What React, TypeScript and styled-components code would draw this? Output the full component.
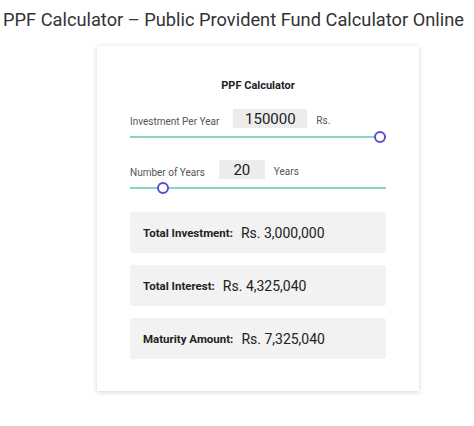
import { FC } from 'react';
import styled, { createGlobalStyle } from 'styled-components';

const GlobalStyle = createGlobalStyle`
  html, body {
    margin: 0;
    padding: 0;
    background: #ffffff;
    font-family: Roboto, 'Liberation Sans', Arial, sans-serif;
  }
`;

const Page = styled.div`
  width: 474px;
  height: 426px;
  overflow: hidden;
`;

const PageTitle = styled.h1`
  margin: 0;
  padding: 9px 0 0 3px;
  font-size: 18.25px;
  font-weight: 400;
  line-height: 22px;
  color: #333333;
  white-space: nowrap;
`;

const Card = styled.div`
  width: 322px;
  box-sizing: border-box;
  margin: 15px 0 0 97px;
  padding: 33px 33px 32px;
  background: #ffffff;
  box-shadow: 0 1px 5px rgba(0, 0, 0, 0.18);
`;

const CardHeading = styled.h2`
  margin: 0 0 17px;
  font-size: 11px;
  line-height: 13px;
  font-weight: 700;
  text-align: center;
  color: #222222;
`;

const InputRow = styled.div<{ $gap: number }>`
  display: flex;
  align-items: baseline;
  height: 19px;
  margin-top: ${(p) => p.$gap}px;
`;

const Label = styled.span`
  font-size: 10px;
  color: #555555;
  position: relative;
  top: 1px;
`;

const ValueBox = styled.div<{ $width: number }>`
  width: ${(p) => p.$width}px;
  height: 19px;
  margin-left: 14px;
  background: #ececec;
  font-size: 15px;
  line-height: 20px;
  color: #222222;
  text-align: center;
`;

const Unit = styled.span`
  margin-left: 9px;
  font-size: 10px;
  color: #555555;
`;

const SliderWrap = styled.div`
  position: relative;
  height: 12px;
  margin-top: 3px;
`;

const Track = styled.div`
  position: absolute;
  left: 0;
  right: 0;
  top: 5px;
  height: 1.5px;
  background: #8fd2c5;
`;

const Thumb = styled.div`
  position: absolute;
  top: 0;
  width: 12px;
  height: 12px;
  box-sizing: border-box;
  border: 2px solid #5b4fcf;
  border-radius: 50%;
  background: #ffffff;
`;

const Results = styled.div`
  display: flex;
  flex-direction: column;
  gap: 12px;
  margin-top: 18px;
`;

const ResultBox = styled.div`
  display: flex;
  align-items: center;
  height: 41px;
  padding: 0 13px;
  border-radius: 3px;
  background: #f2f2f2;
`;

const ResultLabel = styled.span`
  font-size: 11.5px;
  font-weight: 700;
  color: #222222;
  margin-right: 8px;
`;

const ResultValue = styled.span`
  font-size: 14px;
  color: #222222;
`;

const TRACK_WIDTH = 256;
const THUMB = 12;

const Slider: FC<{ value: number; min: number; max: number }> = ({ value, min, max }) => {
  const pct = (value - min) / (max - min);
  return (
    <SliderWrap>
      <Track />
      <Thumb style={{ left: pct * (TRACK_WIDTH - THUMB) }} />
    </SliderWrap>
  );
};

const fmt = (n: number) => 'Rs. ' + n.toLocaleString('en-US');

export default function App() {
  const yearly = 150000;
  const years = 20;
  const results = [
    { label: 'Total Investment:', value: 3000000 },
    { label: 'Total Interest:', value: 4325040 },
    { label: 'Maturity Amount:', value: 7325040 },
  ];

  return (
    <Page>
      <GlobalStyle />
      <PageTitle>PPF Calculator – Public Provident Fund Calculator Online</PageTitle>
      <Card>
        <CardHeading>PPF Calculator</CardHeading>
        <InputRow $gap={0}>
          <Label>Investment Per Year</Label>
          <ValueBox $width={74}>{yearly}</ValueBox>
          <Unit>Rs.</Unit>
        </InputRow>
        <Slider value={yearly} min={500} max={150000} />
        <InputRow $gap={17}>
          <Label>Number of Years</Label>
          <ValueBox $width={46}>{years}</ValueBox>
          <Unit>Years</Unit>
        </InputRow>
        <Slider value={years} min={15} max={60} />
        <Results>
          {results.map((r) => (
            <ResultBox key={r.label}>
              <ResultLabel>{r.label}</ResultLabel>
              <ResultValue>{fmt(r.value)}</ResultValue>
            </ResultBox>
          ))}
        </Results>
      </Card>
    </Page>
  );
}
